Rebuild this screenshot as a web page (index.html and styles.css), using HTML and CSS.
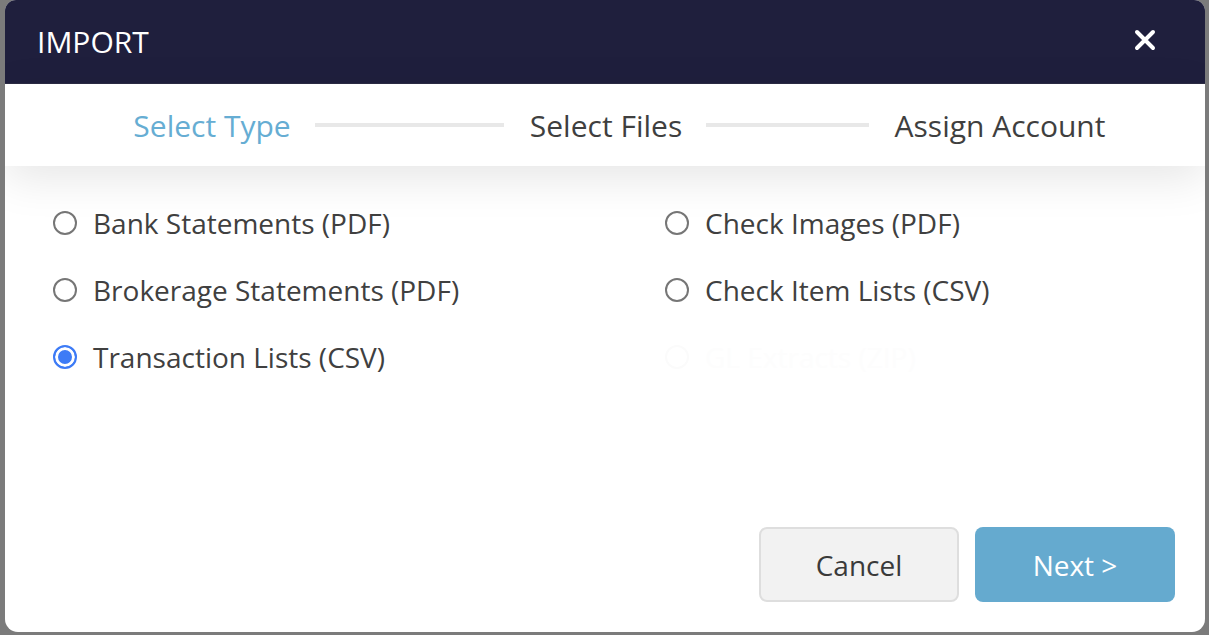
FILE: index.html
```html
<!DOCTYPE html>
<html>
<head>
<meta charset="utf-8">
<link rel="stylesheet" href="styles.css">
</head>
<body>
<div class="dialog">
  <div class="header">
    <div class="title">IMPORT</div>
    <button class="close" aria-label="Close">
      <svg width="22" height="22" viewBox="0 0 22 22"><path d="M3 3 L19 19 M19 3 L3 19" stroke="#fff" stroke-width="4" stroke-linecap="round"/></svg>
    </button>
  </div>
  <div class="stepper">
    <div class="step">
      <span class="seg none left"></span>
      <span class="label active">Select Type</span>
      <span class="seg right"></span>
    </div>
    <div class="step">
      <span class="seg left"></span>
      <span class="label">Select Files</span>
      <span class="seg right"></span>
    </div>
    <div class="step">
      <span class="seg left"></span>
      <span class="label">Assign Account</span>
      <span class="seg none right"></span>
    </div>
  </div>
  <div class="content">
    <div class="options">
      <label class="option"><span class="radio"></span>Bank Statements (PDF)</label>
      <label class="option"><span class="radio"></span>Check Images (PDF)</label>
      <label class="option"><span class="radio"></span>Brokerage Statements (PDF)</label>
      <label class="option"><span class="radio"></span>Check Item Lists (CSV)</label>
      <label class="option"><span class="radio checked"></span>Transaction Lists (CSV)</label>
      <label class="option ghost"><span class="radio"></span>GL Extracts (ZIP)</label>
    </div>
  </div>
  <div class="footer">
    <button class="btn cancel">Cancel</button>
    <button class="btn next">Next &gt;</button>
  </div>
</div>
</body>
</html>
```
FILE: styles.css
```css
html, body {
  margin: 0;
  padding: 0;
  background: #7b7b7b;
  font-family: "Open Sans", "Noto Sans", sans-serif;
}
.dialog {
  margin-left: 5px;
  width: 1200px;
  height: 632px;
  background: #fff;
  border-radius: 11px 11px 13px 13px;
  overflow: hidden;
  display: flex;
  flex-direction: column;
}
.header {
  height: 83px;
  background: #1f1f3d;
  border-bottom: 1px solid #2c2c44;
  display: flex;
  align-items: center;
  justify-content: space-between;
  padding: 0 49px 0 32px;
}
.title {
  color: #fff;
  font-size: 30px;
}
.close {
  background: none;
  border: 0;
  padding: 0;
  width: 22px;
  height: 22px;
  display: flex;
  margin-top: -3px;
}
.stepper {
  height: 82px;
  display: grid;
  grid-template-columns: 1fr 1fr 1fr;
  padding: 0 9px;
  position: relative;
  z-index: 1;
  background: #fff;
  box-shadow: 0 12px 45px rgba(0, 0, 0, 0.10);
}
.step {
  display: flex;
  align-items: center;
}
.seg {
  flex: 1;
  height: 4px;
  background: #e8e8e8;
}
.seg.none { background: transparent; }
.seg.right { margin-left: 24px; }
.seg.left { margin-right: 26px; }
.label {
  font-size: 30px;
  color: #3f3f3f;
  white-space: nowrap;
}
.label.active { color: #66add3; }
.content {
  flex: 1;
  padding: 23px 0 0 48px;
}
.options {
  display: grid;
  grid-template-columns: 612px 1fr;
  grid-auto-rows: 67px;
}
.option {
  display: flex;
  align-items: center;
  font-size: 28px;
  color: #404040;
}
.option.ghost { color: #fdfdfd; }
.option.ghost .radio { border-color: #fbfbfb; }
.radio {
  width: 20px;
  height: 20px;
  border: 2px solid #767676;
  border-radius: 50%;
  margin-right: 16px;
  box-sizing: content-box;
  flex: none;
}
.radio.checked {
  border-color: #3d7bf6;
  background: #3d7bf6;
  box-shadow: inset 0 0 0 3px #fff;
}
.footer {
  display: flex;
  justify-content: flex-end;
  gap: 16px;
  padding: 0 30px 30px 0;
}
.btn {
  width: 200px;
  height: 75px;
  border-radius: 8px;
  font-family: "Open Sans", "Noto Sans", sans-serif;
  font-size: 28px;
}
.cancel {
  background: #f2f2f2;
  border: 2px solid #dedede;
  color: #3a3a3a;
}
.next {
  background: #65aacf;
  border: 0;
  color: #fff;
}
```
